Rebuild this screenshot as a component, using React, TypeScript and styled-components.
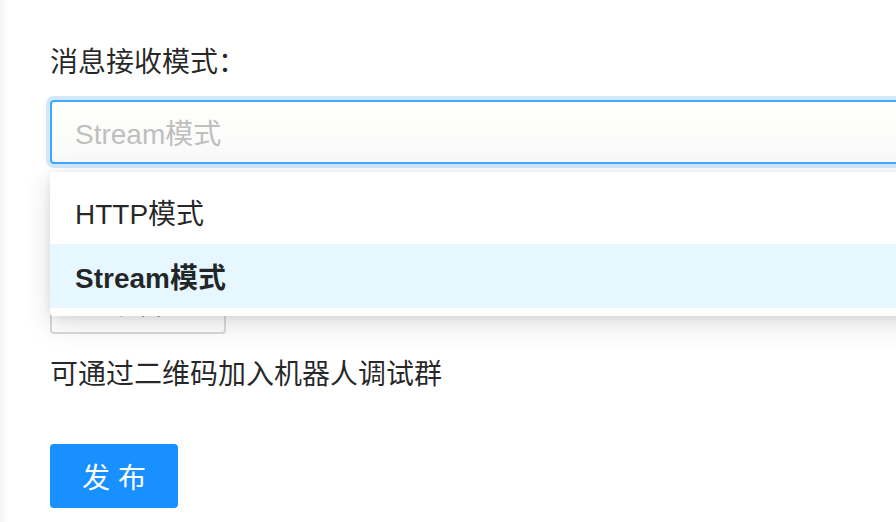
import React from "react";
import styled, { createGlobalStyle } from "styled-components";

const Global = createGlobalStyle`
  html, body {
    margin: 0;
    padding: 0;
    background: #ffffff;
    overflow: hidden;
  }
  body {
    font-family: "Liberation Sans", "Noto Sans CJK SC", sans-serif;
    color: rgba(0, 0, 0, 0.85);
  }
`;

const Page = styled.div`
  width: 896px;
  height: 522px;
  box-sizing: border-box;
  padding: 43px 0 0 50px;
  background: linear-gradient(to right, #f4f4f4 0, #ffffff 7px);
  overflow: hidden;
`;

const Label = styled.div`
  font-size: 28px;
  line-height: 40px;
  height: 40px;
  color: rgba(0, 0, 0, 0.85);
  margin-bottom: 17px;
`;

const SelectWrap = styled.div`
  position: relative;
  width: 900px;
`;

const SelectBox = styled.div`
  box-sizing: border-box;
  height: 64px;
  border: 2px solid #40a9ff;
  border-radius: 4px;
  box-shadow: 0 0 0 4px rgba(24, 144, 255, 0.2);
  background: linear-gradient(to bottom, #fffffd, #f9f9f9);
  display: flex;
  align-items: center;
  padding-left: 23px;
`;

const Placeholder = styled.span`
  font-size: 28px;
  color: #bfbfbf;
`;

const Dropdown = styled.div`
  position: absolute;
  top: 72px;
  left: 0;
  right: 0;
  z-index: 10;
  padding: 8px 0;
  background: #ffffff;
  border-radius: 4px;
  box-shadow: 0 8px 28px rgba(0, 0, 0, 0.13), 0 2px 8px rgba(0, 0, 0, 0.08);
`;

const Option = styled.div<{ $selected?: boolean }>`
  height: 64px;
  display: flex;
  align-items: center;
  padding-left: 25px;
  font-size: 28px;
  color: rgba(0, 0, 0, 0.85);
  font-weight: ${(p) => (p.$selected ? 700 : 400)};
  background: ${(p) => (p.$selected ? "#e6f7ff" : "#ffffff")};
`;

const GhostButton = styled.button`
  box-sizing: border-box;
  margin-top: 106px;
  width: 176px;
  height: 64px;
  border: 2px solid #d9d9d9;
  border-radius: 4px;
  background: #ffffff;
  font-family: inherit;
  font-size: 28px;
  color: rgba(0, 0, 0, 0.85);
  padding: 0;
  display: block;
`;

const Hint = styled.div`
  margin-top: 19px;
  font-size: 28px;
  line-height: 44px;
  color: rgba(0, 0, 0, 0.85);
`;

const PrimaryButton = styled.button`
  box-sizing: border-box;
  margin-top: 47px;
  width: 128px;
  height: 64px;
  border: none;
  border-radius: 4px;
  background: #1890ff;
  color: #ffffff;
  font-family: inherit;
  font-size: 28px;
  padding: 0;
  display: block;
`;

export default function App() {
  return (
    <>
      <Global />
      <Page>
        <Label>消息接收模式：</Label>
        <SelectWrap>
          <SelectBox>
            <Placeholder>Stream模式</Placeholder>
          </SelectBox>
          <Dropdown>
            <Option>HTTP模式</Option>
            <Option $selected>Stream模式</Option>
          </Dropdown>
        </SelectWrap>
        <GhostButton>获取群码</GhostButton>
        <Hint>可通过二维码加入机器人调试群</Hint>
        <PrimaryButton>发 布</PrimaryButton>
      </Page>
    </>
  );
}
